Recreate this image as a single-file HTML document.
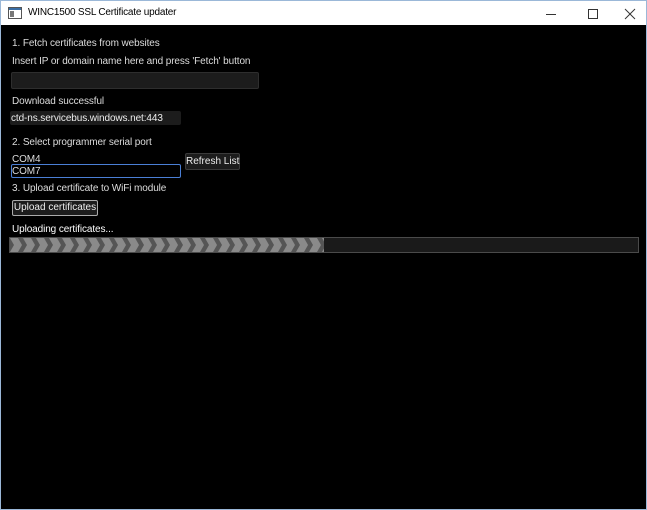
<!DOCTYPE html>
<html><head><meta charset="utf-8"><style>
*{margin:0;padding:0;box-sizing:border-box}
html,body{width:647px;height:510px;overflow:hidden;background:#000;font-family:"Liberation Sans",sans-serif}
#win{position:absolute;left:0;top:0;width:647px;height:510px;border:1px solid #9bb8d8;background:#000}
#title{position:absolute;left:0;top:0;width:645px;height:24px;background:#fff;color:#000;font-size:10px}
.t{position:absolute;color:#ddd;font-size:10px;white-space:nowrap;letter-spacing:-0.1px;margin-top:1px}
.box{position:absolute;background:#1c1c1c;border:1px solid #2e2e2e;border-radius:2px}
.btn{position:absolute;background:#1c1c1c;border:1px solid #3a3a3a;border-radius:2px;color:#eee;font-size:10px;text-align:center;white-space:nowrap}
</style></head><body>
<div id="win">
<div id="title">
 <svg style="position:absolute;left:7px;top:6px" width="14" height="12"><rect x="0.5" y="0.5" width="13" height="11" fill="#fff" stroke="#555"/><rect x="1" y="1" width="12" height="2" fill="#3a6ea5"/><rect x="2" y="4" width="4" height="6" fill="#777"/></svg>
 <span style="position:absolute;left:27px;top:6px;letter-spacing:-0.2px">WINC1500 SSL Certificate updater</span>
 <svg style="position:absolute;left:540px;top:6px" width="100" height="14">
  <line x1="5" y1="7.5" x2="15" y2="7.5" stroke="#333"/>
  <rect x="47.5" y="2.5" width="9" height="9" fill="none" stroke="#333"/>
  <line x1="84" y1="2" x2="94" y2="12" stroke="#333"/><line x1="94" y1="2" x2="84" y2="12" stroke="#333"/>
 </svg>
</div>
<div class="t" style="left:11px;top:36px">1. Fetch certificates from websites</div>
<div class="t" style="left:11px;top:54px">Insert IP or domain name here and press 'Fetch' button</div>
<div class="box" style="left:10px;top:71px;width:248px;height:17px"></div>
<div class="t" style="left:11px;top:94px">Download successful</div>
<div class="box" style="left:9px;top:110px;width:171px;height:14px;border:none"></div>
<div class="t" style="left:10px;top:111px;color:#eee">ctd-ns.servicebus.windows.net:443</div>
<div class="t" style="left:11px;top:135px">2. Select programmer serial port</div>
<div class="t" style="left:11px;top:152px">COM4</div>
<div style="position:absolute;left:10px;top:163px;width:170px;height:14px;border:1.5px solid #4a7fd6;border-radius:2px"></div>
<div class="t" style="left:11px;top:164px">COM7</div>
<div class="btn" style="left:184px;top:152px;width:55px;height:17px;line-height:15px">Refresh List</div>
<div class="t" style="left:11px;top:181px">3. Upload certificate to WiFi module</div>
<div class="btn" style="left:11px;top:199px;width:86px;height:16px;line-height:14px;border:1px solid #aaa">Upload certificates</div>
<div class="t" style="left:11px;top:222px;color:#fff">Uploading certificates...</div>
<div style="position:absolute;left:8px;top:236px;width:630px;height:16px;background:#1a1a1a;border:1px solid #4a4a4a"></div>
<svg style="position:absolute;left:9px;top:237px" width="314" height="14">
 <defs><pattern id="p" width="13" height="14" patternUnits="userSpaceOnUse">
  <rect width="13" height="14" fill="#555"/>
  <polygon points="0,0 8,0 12,7 8,14 0,14 4,7" fill="#8a8a8a"/>
 </pattern></defs>
 <rect width="314" height="14" fill="url(#p)"/>
</svg>
</div>
</body></html>
